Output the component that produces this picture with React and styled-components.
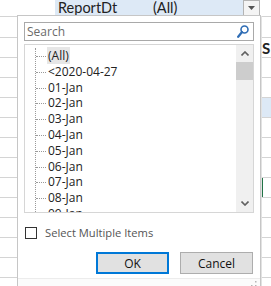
import React from 'react';
import styled, { createGlobalStyle } from 'styled-components';

const GlobalStyle = createGlobalStyle`
  html, body {
    margin: 0;
    padding: 0;
    background: #fff;
    overflow: hidden;
  }
  * { box-sizing: border-box; }
`;

const Page = styled.div`
  position: relative;
  width: 271px;
  height: 286px;
  overflow: hidden;
  background: #fff;
`;

// spreadsheet behind the popup
const Sheet = styled.div`
  display: flex;
  flex-direction: column;
  width: 271px;
`;

const HeaderRow = styled.div`
  display: flex;
  height: 17px;
  border-bottom: 1px solid #d4d4d4;
`;

const BlankCell = styled.div`
  width: ${p => p.$w}px;
  flex-shrink: 0;
`;

const PivotCell = styled.div`
  width: ${p => p.$w}px;
  flex-shrink: 0;
  height: 16px;
  background: #dde9f6;
  padding-left: ${p => p.$pad || 3}px;
  font-family: Lato, "Liberation Sans", sans-serif;
  font-size: 14.5px;
  line-height: 16px;
  color: #222;
`;

const DropButton = styled.div`
  width: 17px;
  height: 16px;
  flex-shrink: 0;
  background: #f4f4f4;
  border: 1px solid #b4b4b4;
  display: flex;
  align-items: center;
  justify-content: center;
`;

const GridRow = styled.div`
  display: grid;
  grid-template-columns: 261px 10px;
  height: ${p => p.$h}px;
  border-bottom: 1px solid #d4d4d4;
`;

const SideCell = styled.div`
  background: ${p => (p.$blue ? '#dde9f6' : 'transparent')};
  border-left: ${p => (p.$selected ? '2px solid #217346' : 'none')};
  font-family: Lato, "Liberation Sans", sans-serif;
  font-weight: 700;
  font-size: 15px;
  line-height: 20px;
  padding-left: 1px;
  color: #222;
  overflow: hidden;
`;

// the filter popup
const Popup = styled.div`
  position: absolute;
  left: 17px;
  top: 15px;
  width: 244px;
  height: 280px;
  background: #fff;
  border: 1px solid #c6c6c6;
  box-shadow: 1px 1px 0 #e2e2e2;
  display: flex;
  flex-direction: column;
  padding: 6px 6px 0 6px;
  font-family: "Open Sans", "Noto Sans", sans-serif;
  font-size: 12px;
  color: #222;
`;

const SearchBox = styled.div`
  height: 19px;
  border: 1px solid #a9a9a9;
  display: flex;
  align-items: center;
  justify-content: space-between;
  padding: 0 4px 0 2px;
  color: #6b6b6b;
  font-size: 12px;
`;

const ListBox = styled.div`
  margin-top: 3px;
  height: 169px;
  border: 1px solid #d6d6d6;
  display: flex;
  overflow: hidden;
`;

const TreeArea = styled.div`
  flex: 1;
  padding: 1px 0 0 10px;
  overflow: hidden;
`;

const TreeBranch = styled.div`
  border-left: 1px dotted #9a9a9a;
  margin-top: 2px;
`;

const TreeItem = styled.div`
  position: relative;
  height: 15.8px;
  line-height: 15.8px;
  padding-left: 11px;
  white-space: nowrap;

  &::before {
    content: '';
    position: absolute;
    left: 0;
    top: 8px;
    width: 10px;
    border-top: 1px dotted #9a9a9a;
  }
`;

const ItemLabel = styled.span`
  padding: 0 1px;
  background: ${p => (p.$focused ? '#e6e6e6' : 'transparent')};
`;

const ScrollBar = styled.div`
  width: 17px;
  background: #f0f0f0;
  display: flex;
  flex-direction: column;
`;

const ScrollArrow = styled.div`
  height: 17px;
  display: flex;
  align-items: center;
  justify-content: center;
`;

const ScrollThumb = styled.div`
  height: 18px;
  background: #cdcdcd;
`;

const ScrollTrack = styled.div`
  flex: 1;
`;

const CheckRow = styled.div`
  margin-top: 13px;
  height: 13px;
  display: flex;
  align-items: center;
  gap: 8px;
  padding-left: 1px;
  color: #555;
  font-size: 11.2px;
`;

const CheckBox = styled.div`
  width: 12px;
  height: 12px;
  border: 1px solid #333;
  background: #fff;
`;

const ButtonRow = styled.div`
  margin-top: 13px;
  display: flex;
  justify-content: flex-end;
  gap: 11px;
  padding-right: 1px;
`;

const DialogButton = styled.div`
  width: 73px;
  height: 22px;
  background: #e1e1e1;
  border: ${p => (p.$default ? '2px solid #0078d7' : '1px solid #adadad')};
  display: flex;
  align-items: center;
  justify-content: center;
  font-size: 12px;
  color: #111;
`;

const GripBar = styled.div`
  margin: 4px -6px 0;
  flex: 1;
  border-top: 1px solid #ececec;
  background: #fbfbfb;
  display: flex;
  justify-content: flex-end;
  padding: 2px 3px 0 0;
`;

const items = [
  '(All)', '<2020-04-27', '01-Jan', '02-Jan', '03-Jan', '04-Jan',
  '05-Jan', '06-Jan', '07-Jan', '08-Jan', '09-Jan',
];

const Chevron = ({ up }) => (
  <svg width="8" height="5" viewBox="0 0 8 5">
    <polyline
      points={up ? '0.5,4.5 4,1 7.5,4.5' : '0.5,0.5 4,4 7.5,0.5'}
      fill="none"
      stroke="#606060"
      strokeWidth="1.6"
    />
  </svg>
);

const Magnifier = () => (
  <svg width="12" height="13" viewBox="0 0 12 13">
    <circle cx="7.5" cy="4.5" r="3.5" fill="none" stroke="#2f6db5" strokeWidth="1.6" />
    <line x1="5" y1="7" x2="1.2" y2="11.8" stroke="#2f6db5" strokeWidth="2.2" strokeLinecap="round" />
  </svg>
);

const rows = [
  { h: 21, side: '' },
  { h: 20, side: 'S' },
  { h: 20 },
  { h: 20 },
  { h: 20, blue: true },
  { h: 20 },
  { h: 20 },
  { h: 20 },
  { h: 20, selected: true },
  { h: 20 },
  { h: 20 },
  { h: 20 },
  { h: 20 },
];

export default function App() {
  return (
    <Page>
      <GlobalStyle />
      <Sheet>
        <HeaderRow>
          <BlankCell $w={55} />
          <PivotCell $w={95}>ReportDt</PivotCell>
          <PivotCell $w={93} $pad={0}>(All)</PivotCell>
          <DropButton>
            <svg width="7" height="4" viewBox="0 0 7 4">
              <polygon points="0,0 7,0 3.5,4" fill="#555" />
            </svg>
          </DropButton>
          <BlankCell $w={11} />
        </HeaderRow>
        {rows.map((r, i) => (
          <GridRow key={i} $h={r.h}>
            <div />
            <SideCell $blue={r.blue} $selected={r.selected}>{r.side}</SideCell>
          </GridRow>
        ))}
      </Sheet>

      <Popup>
        <SearchBox>
          <span>Search</span>
          <Magnifier />
        </SearchBox>
        <ListBox>
          <TreeArea>
            <TreeBranch>
              {items.map((t, i) => (
                <TreeItem key={t}>
                  <ItemLabel $focused={i === 0}>{t}</ItemLabel>
                </TreeItem>
              ))}
            </TreeBranch>
          </TreeArea>
          <ScrollBar>
            <ScrollArrow><Chevron up /></ScrollArrow>
            <ScrollThumb />
            <ScrollTrack />
            <ScrollArrow><Chevron /></ScrollArrow>
          </ScrollBar>
        </ListBox>
        <CheckRow>
          <CheckBox />
          <span>Select Multiple Items</span>
        </CheckRow>
        <ButtonRow>
          <DialogButton $default>OK</DialogButton>
          <DialogButton>Cancel</DialogButton>
        </ButtonRow>
        <GripBar>
          <svg width="6" height="6" viewBox="0 0 6 6">
            <rect x="4" y="0" width="1.5" height="1.5" fill="#b5b5b5" />
            <rect x="4" y="4" width="1.5" height="1.5" fill="#b5b5b5" />
            <rect x="0" y="4" width="1.5" height="1.5" fill="#b5b5b5" />
          </svg>
        </GripBar>
      </Popup>
    </Page>
  );
}
